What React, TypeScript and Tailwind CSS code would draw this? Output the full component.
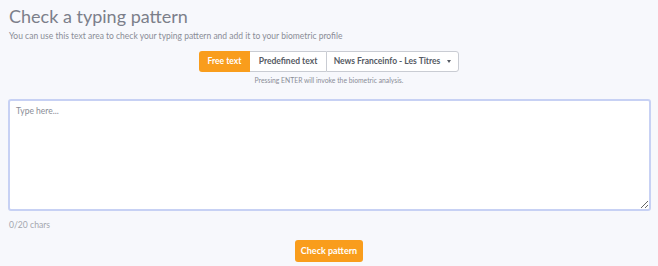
export default function App() {
  return (
    <div className="w-[658px] h-[266px] bg-[#f7f8fc] font-['Lato',sans-serif] overflow-hidden">
      <div className="px-[9px] pt-[5px]">
        <h1 className="text-[18px] leading-[22px] text-[#7c7f8a]">Check a typing pattern</h1>
        <p className="mt-[3px] text-[8.5px] leading-[12px] text-[#8a8d97]">
          You can use this text area to check your typing pattern and add it to your biometric profile
        </p>
        <div className="mt-[9px] flex flex-col items-center">
          <div className="flex h-[21px] text-[8.5px] font-bold whitespace-nowrap">
            <button className="w-[51px] rounded-l-[3px] bg-[#f99d1c] text-white">Free text</button>
            <button className="w-[76px] border-y border-[#c9ccd3] bg-white text-[#555a63]">Predefined text</button>
            <button className="w-[133px] flex items-center justify-center gap-[7px] rounded-r-[3px] border border-[#c9ccd3] bg-white text-[#555a63]">
              News Franceinfo - Les Titres
              <span className="border-x-[2.5px] border-t-[3px] border-x-transparent border-t-[#555a63]" />
            </button>
          </div>
          <p className="mt-[3px] text-[6.8px] leading-[10px] text-[#8a8d97]">
            Pressing ENTER will invoke the biometric analysis.
          </p>
        </div>
        <textarea
          placeholder="Type here..."
          className="mt-[14px] -ml-[1px] block w-[643px] h-[112px] rounded-[3px] border-2 border-[#c7d1f4] bg-white px-[6px] py-[4px] text-[8.5px] text-[#555a63] placeholder:text-[#8a8d97] outline-none"
        />
        <p className="mt-[8px] text-[8.6px] leading-[12px] text-[#a3a6ae]">0/20 chars</p>
        <div className="mt-[9px] flex justify-center">
          <button className="h-[22px] w-[68px] rounded-[3px] bg-[#f99d1c] text-[9px] font-bold text-white">Check pattern</button>
        </div>
      </div>
    </div>
  );
}
